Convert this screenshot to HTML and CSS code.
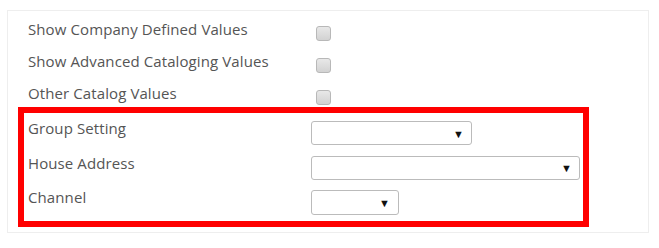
FILE: index.html
```html
<!DOCTYPE html>
<html lang="en">
<head>
    <meta charset="UTF-8">
    <meta name="viewport" content="width=device-width, initial-scale=1.0">
    <title>Catalog Settings</title>
    <link rel="stylesheet" href="styles.css">
</head>
<body>
    <!-- Settings panel -->
    <div class="panel">
        <div class="row">
            <span class="label">Show Company Defined Values</span>
            <span class="check"></span>
        </div>
        <div class="row">
            <span class="label">Show Advanced Cataloging Values</span>
            <span class="check"></span>
        </div>
        <div class="row">
            <span class="label">Other Catalog Values</span>
            <span class="check"></span>
        </div>

        <!-- Highlighted fields -->
        <div class="highlight">
            <div class="row field">
                <span class="label">Group Setting</span>
                <span class="select group">&#9660;</span>
            </div>
            <div class="row field">
                <span class="label">House Address</span>
                <span class="select house">&#9660;</span>
            </div>
            <div class="row field">
                <span class="label">Channel</span>
                <span class="select channel">&#9660;</span>
            </div>
        </div>
    </div>
</body>
</html>
```

FILE: styles.css
```css
/* Catalog settings panel */
body {
    margin: 0;
    padding: 10px 10px 0 7px;
    background: #fff;
    font-family: "Open Sans", sans-serif;
    font-size: 15px;
    color: #555;
}

.panel {
    width: 642px;
    height: 223px;
    border: 1px solid #eee;
    padding: 2px 0 0 20px;
    box-sizing: border-box;
}

.row {
    display: grid;
    grid-template-columns: 288px auto;
    align-items: start;
    height: 32px;
}

.label {
    line-height: 20px;
    margin-top: 6px;
    letter-spacing: 0.1px;
}

.check {
    width: 13px;
    height: 13px;
    margin-top: 13px;
    border: 1px solid #b8b8b8;
    border-radius: 3px;
    background: linear-gradient(#e8e8e8, #d2d2d2);
}

.highlight {
    width: 571px;
    height: 120px;
    margin: -2px 0 0 -10px;
    border: 6px solid #f00;
    box-sizing: border-box;
    padding: 0 0 0 4px;
}

.field {
    grid-template-columns: 283px auto;
    height: 34.5px;
}

.field .label {
    margin-top: 5px;
}

.select {
    height: 24px;
    box-sizing: border-box;
    border: 1px solid #bbb;
    border-radius: 3px;
    background: #fff;
    color: #111;
    font-size: 11px;
    display: flex;
    align-items: center;
    justify-content: flex-end;
    padding-right: 7px;
    margin-top: 8px;
}

.group {
    width: 161px;
}

.house {
    width: 269px;
}

.channel {
    width: 88px;
    height: 25px;
    padding-right: 8px;
}
```
